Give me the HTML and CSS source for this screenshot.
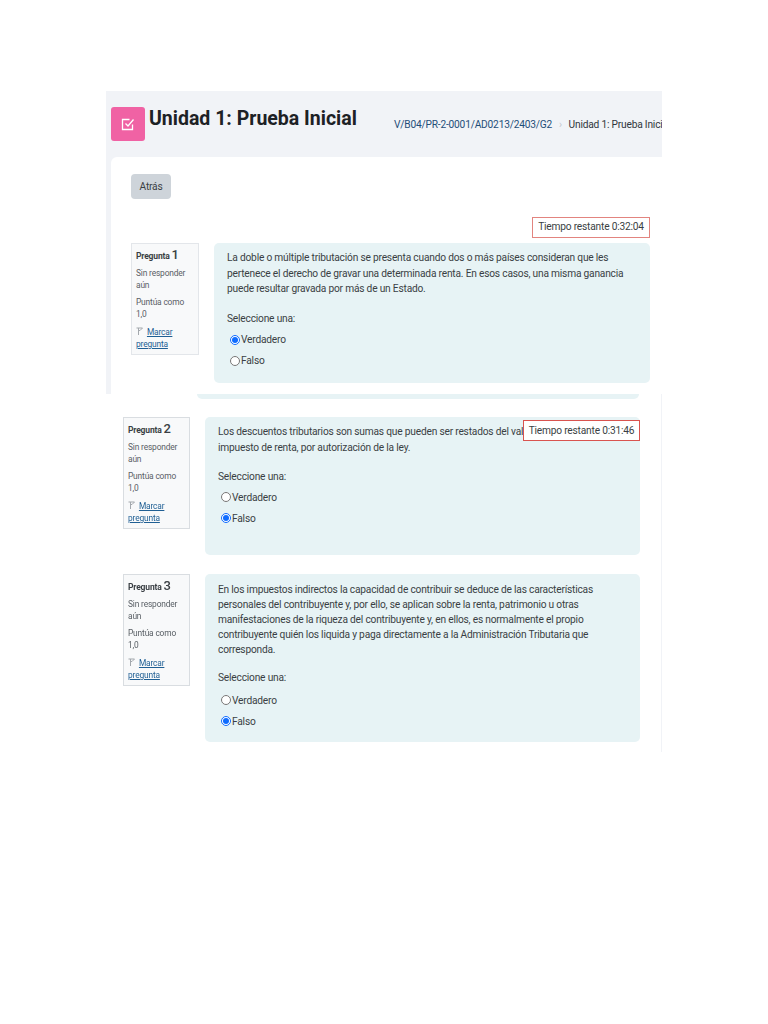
FILE: index.html
```html
<!DOCTYPE html>
<html lang="es">
<head>
    <meta charset="utf-8">
    <link rel="stylesheet" href="styles.css">
    <title>Unidad 1: Prueba Inicial</title>
</head>
<body>
    <div class="sheet">
        <section class="shot-top">
            <header class="page-head">
                <span class="tile">
                    <svg width="14" height="14" viewBox="0 0 14 14" fill="none" stroke="#fff" stroke-width="1.3">
                        <path d="M11.5 7.5v5h-10v-10h7"/>
                        <path d="M4.5 6.5l2.5 2.5 5.5-6.5"/>
                    </svg>
                </span>
                <h1>Unidad 1: Prueba Inicial</h1>
                <nav class="crumbs">
                    <a>V/B04/PR-2-0001/AD0213/2403/G2</a>
                    <span class="sep">›</span>
                    <span>Unidad 1: Prueba Inici</span>
                </nav>
            </header>
            <div class="panel">
                <button class="back">Atrás</button>
                <div class="timer-row"><div class="timer">Tiempo restante 0:32:04</div></div>
                <div class="question q1">
                    <aside class="info">
                        <h3>Pregunta <b>1</b></h3>
                        <p>Sin responder aún</p>
                        <p>Puntúa como 1,0</p>
                        <p class="flag">
                            <svg width="7" height="8" viewBox="0 0 7 8" fill="none" stroke="#a3a8ad" stroke-width="1"><path d="M2.5 8V1M.5 1h6L4 3.500H2.500"/></svg>
                            <a>Marcar pregunta</a>
                        </p>
                    </aside>
                    <div class="card">
                        <p class="text">La doble o múltiple tributación se presenta cuando dos o más países consideran que les pertenece el derecho de gravar una determinada renta. En esos casos, una misma ganancia puede resultar gravada por más de un Estado.</p>
                        <p class="prompt">Seleccione una:</p>
                        <label class="opt"><input type="radio" name="p1" checked> Verdadero</label>
                        <label class="opt"><input type="radio" name="p1"> Falso</label>
                    </div>
                </div>
            </div>
        </section>
        <section class="shot-bottom">
            <div class="tail"></div>
            <div class="question q2">
                <aside class="info">
                    <h3>Pregunta <b>2</b></h3>
                    <p>Sin responder aún</p>
                    <p>Puntúa como 1,0</p>
                    <p class="flag">
                        <svg width="7" height="8" viewBox="0 0 7 8" fill="none" stroke="#a3a8ad" stroke-width="1"><path d="M2.500 8V1M.5 1h6L4 3.500H2.500"/></svg>
                        <a>Marcar pregunta</a>
                    </p>
                </aside>
                <div class="card">
                    <p class="text">Los descuentos tributarios son sumas que pueden ser restados del val<br>impuesto de renta, por autorización de la ley.</p>
                    <p class="prompt">Seleccione una:</p>
                    <label class="opt"><input type="radio" name="p2"> Verdadero</label>
                    <label class="opt"><input type="radio" name="p2" checked> Falso</label>
                    <div class="timer timer-over">Tiempo restante 0:31:46</div>
                </div>
            </div>
            <div class="question q3">
                <aside class="info">
                    <h3>Pregunta <b>3</b></h3>
                    <p>Sin responder aún</p>
                    <p>Puntúa como 1,0</p>
                    <p class="flag">
                        <svg width="7" height="8" viewBox="0 0 7 8" fill="none" stroke="#a3a8ad" stroke-width="1"><path d="M2.500 8V1M.5 1h6L4 3.500H2.500"/></svg>
                        <a>Marcar pregunta</a>
                    </p>
                </aside>
                <div class="card">
                    <p class="text">En los impuestos indirectos la capacidad de contribuir se deduce de las características personales del contribuyente y, por ello, se aplican sobre la renta, patrimonio u otras manifestaciones de la riqueza del contribuyente y, en ellos, es normalmente el propio contribuyente quién los liquida y paga directamente a la Administración Tributaria que corresponda.</p>
                    <p class="prompt">Seleccione una:</p>
                    <label class="opt"><input type="radio" name="p3"> Verdadero</label>
                    <label class="opt"><input type="radio" name="p3" checked> Falso</label>
                </div>
            </div>
        </section>
    </div>
</body>
</html>
```

FILE: styles.css
```css
* {
    margin: 0;
    padding: 0;
    box-sizing: border-box;
}

html, body {
    background-color: #fff;
}

body {
    font-family: Roboto, "Liberation Sans", sans-serif;
    font-size: 10.2px;
    letter-spacing: -0.2px;
    line-height: 15.5px;
    color: #3a3f44;
}

.sheet {
    width: 556px;
    margin: 91px 0 0 106px;
    filter: blur(0.5px);
}

/* first pasted capture */
.shot-top {
    height: 303px;
    background-color: #f1f3f7;
    padding-left: 5px;
    overflow: hidden;
}

.page-head {
    height: 66px;
    display: flex;
    align-items: flex-start;
    white-space: nowrap;
    overflow: hidden;
}

.tile {
    flex: none;
    width: 34px;
    height: 34px;
    margin-top: 16px;
    background-color: #f062a4;
    border-radius: 3px;
    display: flex;
    align-items: center;
    justify-content: center;
}

h1 {
    flex: none;
    width: 245px;
    margin: 14px 0 0 4px;
    font-size: 19.5px;
    letter-spacing: 0;
    line-height: 28px;
    font-weight: 700;
    color: #1d2125;
}

.crumbs {
    margin-top: 26px;
    color: #30363c;
}

.crumbs a {
    color: #1f4e79;
}

.crumbs .sep {
    margin: 0 4.5px;
    color: #c3c7cc;
}

.panel {
    height: 237px;
    background-color: #fff;
    border-top-left-radius: 6px;
    padding: 17px 12px 0 20px;
}

.back {
    display: block;
    width: 40px;
    height: 25px;
    border: none;
    border-radius: 4px;
    background-color: #ced4da;
    color: #3a3f44;
    font: inherit;
    letter-spacing: inherit;
}

.timer-row {
    display: flex;
    justify-content: flex-end;
    margin-top: 18px;
}

.timer {
    width: 118px;
    height: 21px;
    border: 1px solid #e2847f;
    background-color: #fff;
    text-align: center;
    line-height: 18px;
    white-space: nowrap;
}

.question {
    display: flex;
    align-items: flex-start;
}

.q1 {
    margin-top: 5px;
}

.q1 .card {
    height: 140px;
    width: 436px;
    margin-left: 15px;
    flex: none;
}

.q1 .prompt {
    margin-bottom: 6px;
}

.info {
    flex: none;
    width: 68px;
    height: 112px;
    padding: 4px 4px 0;
    background-color: #f8f9fa;
    border: 1px solid #e3e6ea;
    font-size: 8.4px;
    letter-spacing: -0.16px;
    line-height: 12px;
    color: #5a6066;
}

.info h3 {
    font-size: 8.5px;
    line-height: 13px;
    font-weight: 700;
    color: #3a3f44;
    margin-bottom: 4px;
}

.info h3 b {
    font-size: 13px;
    font-weight: 500;
}

.info p {
    margin-bottom: 5px;
}

.info .flag {
    margin-top: 6px;
}

.flag a {
    color: #1f5f94;
    text-decoration: underline;
}

.flag svg {
    margin-right: 2px;
}

.card {
    position: relative;
    background-color: #e7f3f5;
    border-radius: 5px;
    padding: 7px 13px;
}

.prompt {
    margin-top: 14px;
    margin-bottom: 5px;
}

.opt {
    display: flex;
    align-items: center;
    gap: 1px;
    height: 15.5px;
    margin: 0 0 5.500px 3px;
}

.opt input {
    width: 10px;
    height: 10px;
    margin: 0;
    accent-color: #0f6cff;
}

/* second pasted capture */
.shot-bottom {
    height: 358px;
    padding-right: 17px;
    border-right: 1px solid #f1f3f7;
}

.tail {
    width: 442px;
    height: 5px;
    margin-left: 91px;
    background-color: #e7f3f5;
    border-radius: 0 0 5px 5px;
}

.q2 {
    margin: 18px 0 0 17px;
}

.q3 {
    margin: 19px 0 0 17px;
}

.shot-bottom .info {
    width: 67px;
    border-color: #d9dde1;
}

.shot-bottom .card {
    width: 435px;
    margin-left: 15px;
    flex: none;
}

.q2 .card {
    height: 138px;
}

.q3 .card {
    height: 168px;
    padding-top: 8px;
}

.q3 .text {
    line-height: 15px;
}

.q3 .prompt {
    margin-top: 13px;
    margin-bottom: 7px;
}

.timer-over {
    position: absolute;
    top: 3px;
    right: 0;
    width: 117px;
    border-color: #d9534f;
    line-height: 19px;
}
```
